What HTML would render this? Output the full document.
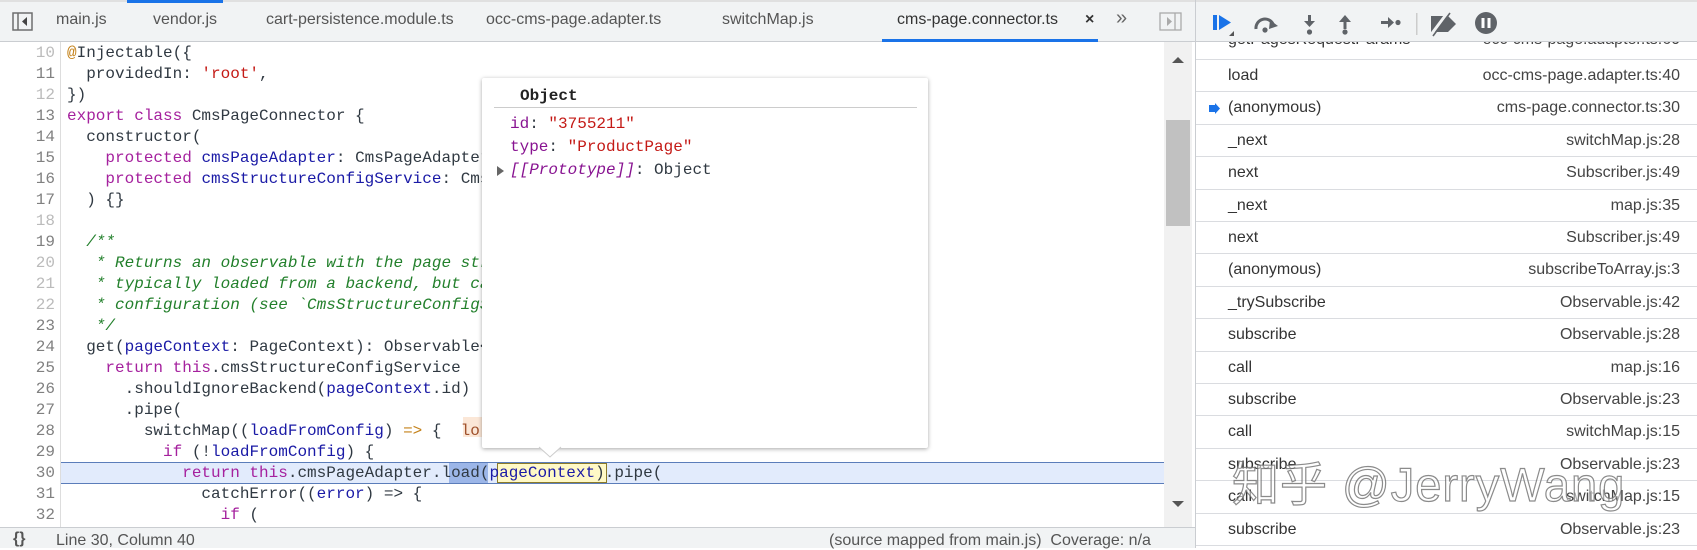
<!DOCTYPE html>
<html><head><meta charset="utf-8"><style>
*{margin:0;padding:0;box-sizing:border-box}
body{width:1697px;height:548px;overflow:hidden;background:#fff;font-family:"Liberation Sans",sans-serif;position:relative;color:#333}
.abs{position:absolute}
.tabbar{left:0;top:0;width:1196px;height:42px;background:#f1f3f4;border-bottom:1px solid #cacdd1;border-top:2px solid #e0e0e0}
.tab{position:absolute;top:11px;font-size:16px;color:#555;white-space:nowrap}
.code{position:absolute;left:0;top:0;font-family:"Liberation Mono",monospace;font-size:16px;line-height:21px;color:#303942;white-space:pre}
.ln{position:absolute;left:0;width:55px;text-align:right;font-family:"Liberation Mono",monospace;font-size:16px;line-height:21px;color:#808080}
.k{color:#a5219e}.s{color:#c41a16}.c{color:#23802c;font-style:italic}.v{color:#1a1aa6}.lt{color:#bbb}
.row{position:absolute;left:1196px;width:501px;height:32.4px;border-bottom:1px solid #dadce0;font-size:16px;line-height:32px}
.row .n{position:absolute;left:32px}.row .f{position:absolute;right:17px;color:#444}
</style></head><body>
<div class="abs tabbar"></div>
<div class="abs" style="left:127px;top:0;width:96px;height:3px;background:#1a73e8"></div>
<svg class="abs" style="left:12px;top:12px" width="22" height="20"><rect x="1" y="1" width="19" height="17" fill="none" stroke="#6e6e6e" stroke-width="1.5"/><line x1="6" y1="1" x2="6" y2="18" stroke="#6e6e6e" stroke-width="1.5"/><path d="M15 5 L10 9.5 L15 14Z" fill="#444"/></svg>
<div class="tab" style="left:56px">main.js</div>
<div class="tab" style="left:153px">vendor.js</div>
<div class="tab" style="left:266px">cart-persistence.module.ts</div>
<div class="tab" style="left:486px">occ-cms-page.adapter.ts</div>
<div class="tab" style="left:722px">switchMap.js</div>
<div class="tab" style="left:897px;color:#333">cms-page.connector.ts</div>
<div class="tab" style="left:1085px;color:#333;font-weight:bold">×</div>
<div class="tab" style="left:1116px;font-size:20px;top:7px;color:#666">»</div>
<div class="abs" style="left:882px;top:39px;width:216px;height:3px;background:#1a73e8"></div>
<svg class="abs" style="left:1159px;top:12px" width="24" height="20"><rect x="1" y="1" width="21" height="17" fill="none" stroke="#aaa" stroke-width="1.3"/><line x1="16" y1="1" x2="16" y2="18" stroke="#aaa" stroke-width="1.3"/><path d="M8 5 L13 9.5 L8 14Z" fill="#aaa"/></svg>

<!-- editor -->
<div class="abs" style="left:0;top:42px;width:1164px;height:485px;overflow:hidden">
<div class="abs" style="left:60px;top:0;width:1px;height:485px;background:#ddd"></div>
<div class="abs" style="left:61px;top:420px;width:1103px;height:22px;background:#e2ebfc;border-top:1px solid #5b7dba;border-bottom:1px solid #5b7dba"></div>
<div class="abs" style="left:449px;top:421px;width:39px;height:20px;background:#9cb6e8"></div>
<div class="abs" style="left:497px;top:421px;width:110px;height:20px;background:#fff9c6;border:1px solid #8a7a2a"></div>
<div class="abs" style="left:463px;top:375px;width:30px;height:20px;background:#fbe7d7"></div>
<div class="ln" style="top:1px">
<span class="lt">10</span><br>11<br><span class="lt">12</span><br>13<br>14<br>15<br>16<br>17<br><span class="lt">18</span><br>19<br><span class="lt">20</span><br><span class="lt">21</span><br><span class="lt">22</span><br>23<br>24<br>25<br>26<br>27<br>28<br>29<br>30<br>31<br>32</div>
<div class="code" style="left:67px;top:1px"><span style="color:#c4821a">@</span>Injectable({
  providedIn: <span class="s">'root'</span>,
})
<span class="k">export class</span> CmsPageConnector {
  constructor(
    <span class="k">protected</span> <span class="v">cmsPageAdapter</span>: CmsPageAdapter,
    <span class="k">protected</span> <span class="v">cmsStructureConfigService</span>: CmsStructureConfigService
  ) {}

  <span class="c">/**</span>
<span class="c">   * Returns an observable with the page structure</span>
<span class="c">   * typically loaded from a backend, but can be</span>
<span class="c">   * configuration (see `CmsStructureConfigService`).</span>
<span class="c">   */</span>
  get(<span class="v">pageContext</span>: PageContext): Observable&lt;CmsStructureModel&gt; {
    <span class="k">return this</span>.cmsStructureConfigService
      .shouldIgnoreBackend(<span class="v">pageContext</span>.id)
      .pipe(
        switchMap((<span class="v">loadFromConfig</span>) <span style="color:#c4821a">=&gt;</span> {  <span style="color:#a0522d">lo</span>
          <span class="k">if</span> (!<span class="v">loadFromConfig</span>) {
            <span class="k">return this</span>.cmsPageAdapter.load(<span class="v">pageContext</span>).pipe(
              catchError((<span class="v">error</span>) =&gt; {
                <span class="k">if</span> (</div>
</div>
<!-- editor scrollbar -->
<div class="abs" style="left:1164px;top:42px;width:28px;height:485px;background:#f1f1f1"></div>
<div class="abs" style="left:1166px;top:120px;width:24px;height:106px;background:#c1c1c1"></div>
<svg class="abs" style="left:1171px;top:55px" width="14" height="10"><path d="M1 8 L7 2 L13 8Z" fill="#555"/></svg>
<svg class="abs" style="left:1171px;top:499px" width="14" height="10"><path d="M1 2 L7 8 L13 2Z" fill="#555"/></svg>
<!-- status -->
<div class="abs" style="left:0;top:527px;width:1196px;height:21px;background:#f1f3f4;border-top:1px solid #cacdd1"></div>
<div class="abs" style="left:13px;top:530px;font-size:16px;font-weight:bold;color:#555">{}</div>
<div class="abs" style="left:56px;top:532px;font-size:16px;color:#555">Line 30, Column 40</div>
<div class="abs" style="left:829px;top:532px;font-size:16px;color:#555;white-space:nowrap">(source mapped from main.js)&nbsp; Coverage: n/a</div>

<!-- tooltip -->
<div class="abs" style="left:482px;top:78px;width:446px;height:370px;background:#fff;box-shadow:0 1px 4px rgba(0,0,0,.35);border-radius:2px"></div>
<svg class="abs" style="left:538px;top:446px" width="24" height="12"><path d="M0 0 L12 11 L24 0Z" fill="#fff"/><path d="M1 1 L12 11 L23 1" fill="none" stroke="#ccc"/></svg>
<div class="abs" style="left:520px;top:87px;font-family:'Liberation Mono',monospace;font-size:16px;font-weight:bold;color:#222">Object</div>
<div class="abs" style="left:494px;top:107px;width:423px;height:1px;background:#ccc"></div>
<div class="abs" style="left:510px;top:113px;font-family:'Liberation Mono',monospace;font-size:16px;line-height:23px;white-space:pre;color:#303942"><span style="color:#881391">id</span>: <span class="s">"3755211"</span>
<span style="color:#881391">type</span>: <span class="s">"ProductPage"</span>
<span style="color:#881391;font-style:italic">[[Prototype]]</span>: Object</div>
<svg class="abs" style="left:496px;top:165px" width="10" height="12"><path d="M1 1 L8 6 L1 11Z" fill="#666"/></svg>

<!-- right pane -->
<div class="abs" style="left:1195px;top:0;width:1px;height:548px;background:#cacdd1"></div>
<div class="abs" style="left:1196px;top:0;width:501px;height:42px;background:#f1f3f4;border-bottom:1px solid #cacdd1;border-top:2px solid #e0e0e0"></div>
<svg class="abs" style="left:1212px;top:12px" width="300" height="26">
<rect x="1" y="3" width="4" height="15" fill="#1a73e8"/><path d="M7 3 L19 10.5 L7 18Z" fill="#1a73e8"/><path d="M17 24 L22 19 L22 24Z" fill="#555"/>
<path d="M44 17 A9 9 0 0 1 61 12" fill="none" stroke="#5f6368" stroke-width="3"/><path d="M58 8 L66 14 L57 17Z" fill="#5f6368"/><circle cx="53" cy="18" r="2.6" fill="#5f6368"/>
<rect x="96" y="3" width="3" height="8" fill="#5f6368"/><path d="M92 9 L103 9 L97.5 15Z" fill="#5f6368"/><circle cx="97.5" cy="20" r="2.6" fill="#5f6368"/>
<rect x="131.5" y="9" width="3" height="8" fill="#5f6368"/><path d="M127 10 L139 10 L133 3Z" fill="#5f6368"/><circle cx="133" cy="20" r="2.6" fill="#5f6368"/>
<rect x="169" y="9" width="8" height="3" fill="#5f6368"/><path d="M176 5 L182 10.5 L176 16Z" fill="#5f6368"/><circle cx="186" cy="10.5" r="2.6" fill="#5f6368"/>
<rect x="204" y="1" width="1.5" height="22" fill="#ccc"/>
<path d="M219 4 L236 4 L244 12 L236 20 L219 20Z" fill="#5f6368"/><line x1="218" y1="24" x2="236" y2="0" stroke="#f1f3f4" stroke-width="3"/><line x1="221" y1="24" x2="238" y2="1" stroke="#5f6368" stroke-width="1.6"/>
<circle cx="274" cy="11" r="11" fill="#5f6368"/><rect x="269.5" y="6" width="3" height="10" fill="#fff"/><rect x="275.5" y="6" width="3" height="10" fill="#fff"/>
</svg>
<div class="abs" style="left:1196px;top:42px;width:501px;height:506px;overflow:hidden">
<div style="position:absolute;left:32px;top:-11px;font-size:16px;color:#333">getPagesRequestParams</div>
<div style="position:absolute;right:17px;top:-11px;font-size:16px;color:#444">occ-cms-page.adapter.ts:60</div>
<div style="position:absolute;left:0;top:17px;width:501px;height:1px;background:#dadce0"></div>
</div>
<div class="row" style="top:60px"><span class="n">load</span><span class="f">occ-cms-page.adapter.ts:40</span></div>
<div class="row" style="top:92.4px"><svg style="position:absolute;left:13px;top:11px" width="12" height="11"><path d="M0 2 L6 2 L6 0 L11 5.5 L6 11 L6 9 L0 9Z" fill="#1a73e8"/></svg><span class="n">(anonymous)</span><span class="f">cms-page.connector.ts:30</span></div>
<div class="row" style="top:124.8px"><span class="n">_next</span><span class="f">switchMap.js:28</span></div>
<div class="row" style="top:157.2px"><span class="n">next</span><span class="f">Subscriber.js:49</span></div>
<div class="row" style="top:189.6px"><span class="n">_next</span><span class="f">map.js:35</span></div>
<div class="row" style="top:222px"><span class="n">next</span><span class="f">Subscriber.js:49</span></div>
<div class="row" style="top:254.4px"><span class="n">(anonymous)</span><span class="f">subscribeToArray.js:3</span></div>
<div class="row" style="top:286.8px"><span class="n">_trySubscribe</span><span class="f">Observable.js:42</span></div>
<div class="row" style="top:319.2px"><span class="n">subscribe</span><span class="f">Observable.js:28</span></div>
<div class="row" style="top:351.6px"><span class="n">call</span><span class="f">map.js:16</span></div>
<div class="row" style="top:384px"><span class="n">subscribe</span><span class="f">Observable.js:23</span></div>
<div class="row" style="top:416.4px"><span class="n">call</span><span class="f">switchMap.js:15</span></div>
<div class="row" style="top:448.8px"><span class="n">subscribe</span><span class="f">Observable.js:23</span></div>
<div class="row" style="top:481.2px"><span class="n">call</span><span class="f">switchMap.js:15</span></div>
<div class="row" style="top:513.6px"><span class="n">subscribe</span><span class="f">Observable.js:23</span></div>
<div class="abs" style="left:1232px;top:446px;font-family:'Liberation Sans','Noto Sans CJK SC',sans-serif;font-size:47px;color:rgba(255,255,255,.55);-webkit-text-stroke:1.2px rgba(110,110,110,.8);white-space:nowrap;letter-spacing:1px">知乎 @JerryWang</div>
</body></html>
